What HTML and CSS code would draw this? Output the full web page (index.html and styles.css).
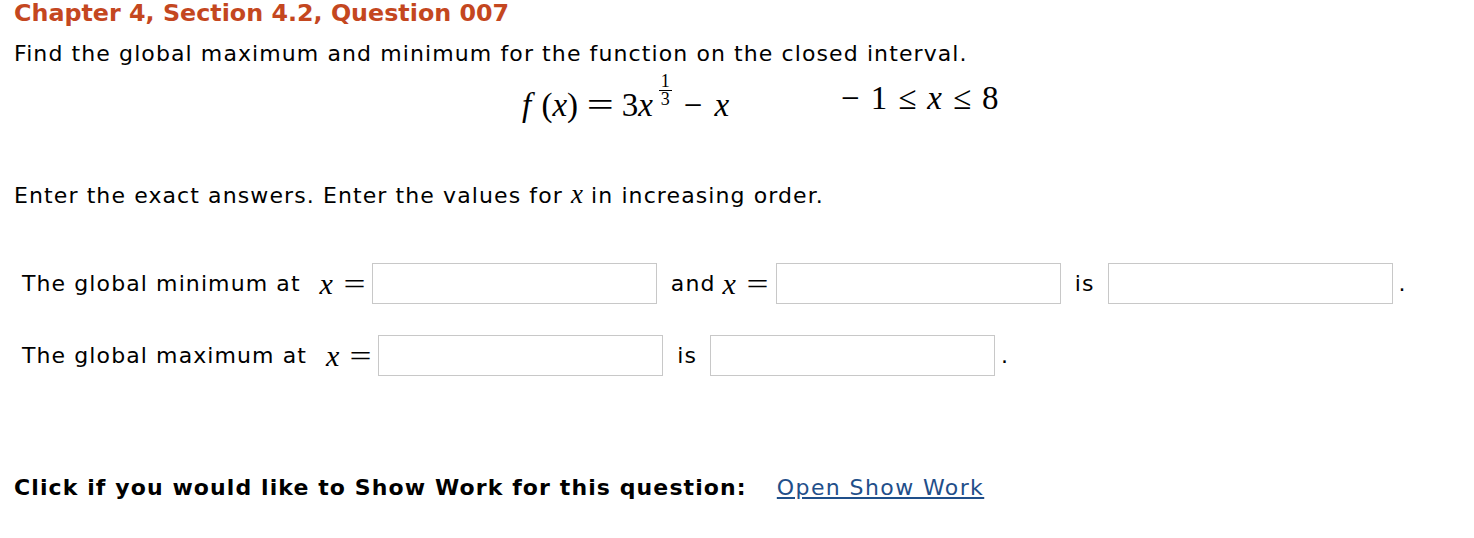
FILE: index.html
```html
<!DOCTYPE html>
<html lang="en">
<head>
    <meta charset="UTF-8">
    <title>Chapter 4, Section 4.2, Question 007</title>
    <link rel="stylesheet" href="styles.css">
</head>
<body>

    <div class="question">
        <h2 class="title">Chapter 4, Section 4.2, Question 007</h2>
        <p class="prompt">Find the global maximum and minimum for the function on the closed interval.</p>

        <!-- Function and interval -->
        <div class="formula">
            <span class="fn"><i>f</i> <span class="paren">(<i>x</i>)</span><span class="op wide">=</span>3<i>x</i><span class="frac"><span class="num">1</span><span class="den">3</span></span><span class="op">&minus;</span><i>x</i></span>
            <span class="interval"><span class="op first">&minus;</span>1<span class="op">&le;</span><i>x</i><span class="op">&le;</span>8</span>
        </div>

        <p class="instructions">Enter the exact answers. Enter the values for <i class="var">x</i> in increasing order.</p>

        <!-- Answer rows -->
        <div class="answer-row">
            <span class="label">The global minimum at</span>
            <span class="eq"><i>x</i><span class="equals">=</span></span>
            <input type="text" class="answer">
            <span class="label">and</span>
            <span class="eq after-and"><i>x</i><span class="equals">=</span></span>
            <input type="text" class="answer">
            <span class="label spaced">is</span>
            <input type="text" class="answer">
            <span class="dot">.</span>
        </div>
        <div class="answer-row">
            <span class="label">The global maximum at</span>
            <span class="eq"><i>x</i><span class="equals">=</span></span>
            <input type="text" class="answer">
            <span class="label spaced">is</span>
            <input type="text" class="answer">
            <span class="dot">.</span>
        </div>

        <p class="show-work">
            <b>Click if you would like to Show Work for this question:</b>
            <a href="#">Open Show Work</a>
        </p>
    </div>

</body>
</html>
```

FILE: styles.css
```css
/* General Styles */
body {
    font-family: "DejaVu Sans", Verdana, sans-serif;
    color: #000;
    background-color: #fff;
    margin: 0;
    padding: 0;
}

.question {
    padding: 0 14px;
}

.title {
    font-size: 23.8px;
    color: #c4471f;
    margin: 0;
    line-height: 26px;
}

.prompt {
    font-size: 22px;
    letter-spacing: 1.1px;
    margin: 15px 0 0;
    line-height: 26px;
}

/* Formula */
.formula {
    font-family: "Liberation Serif", "Times New Roman", serif;
    font-size: 33px;
    display: flex;
    margin-top: 1px;
    padding-left: 508px;
    height: 60px;
    align-items: center;
}

.fn {
    width: 319px;
}

.paren {
    margin-left: 2px;
}

.op {
    margin: 0 12px;
}

.interval .op {
    margin: 0 11px;
}

.op.wide {
    display: inline-block;
    transform: scaleX(1.45);
    margin: 0 12px 0 13px;
}

.interval .op.first {
    margin-left: 0;
}

.frac {
    display: inline-flex;
    flex-direction: column;
    font-size: 18px;
    line-height: 16px;
    vertical-align: 29px;
    margin: 0 0 0 6px;
    text-align: center;
}

.frac .num {
    border-bottom: 1px solid #000;
    padding: 0 2px 1px;
}

.instructions {
    font-size: 22px;
    letter-spacing: 1.1px;
    margin: 53px 0 0;
    line-height: 26px;
}

.var {
    font-family: "Liberation Serif", "Times New Roman", serif;
    font-size: 27px;
    letter-spacing: 0;
}

/* Answers */
.answer-row {
    display: flex;
    align-items: center;
    font-size: 22px;
    letter-spacing: 1.1px;
    padding-left: 8px;
    margin-top: 54px;
}

.answer-row + .answer-row {
    margin-top: 31px;
}

.answer-row .label.spaced {
    margin-right: 13px;
}

.eq {
    font-family: "Liberation Serif", "Times New Roman", serif;
    font-size: 30px;
    letter-spacing: 0;
    margin: 0 7px 0 19px;
}

.eq.after-and {
    margin: 0 8px 0 7px;
}

.equals {
    display: inline-block;
    transform: scaleX(1.3);
    margin: 0 2px 0 13px;
}

.answer {
    width: 285px;
    height: 41px;
    box-sizing: border-box;
    border: 1px solid #c8c8c8;
    margin-right: 14px;
    padding: 4px;
    font-size: 18px;
}

.dot {
    margin-left: -8px;
}

.show-work {
    font-size: 22px;
    letter-spacing: 1.1px;
    margin: 99px 0 0;
    line-height: 26px;
}

.show-work b {
    margin-right: 22px;
}

.show-work a {
    color: #1f4f8a;
    letter-spacing: 1.4px;
}
```
